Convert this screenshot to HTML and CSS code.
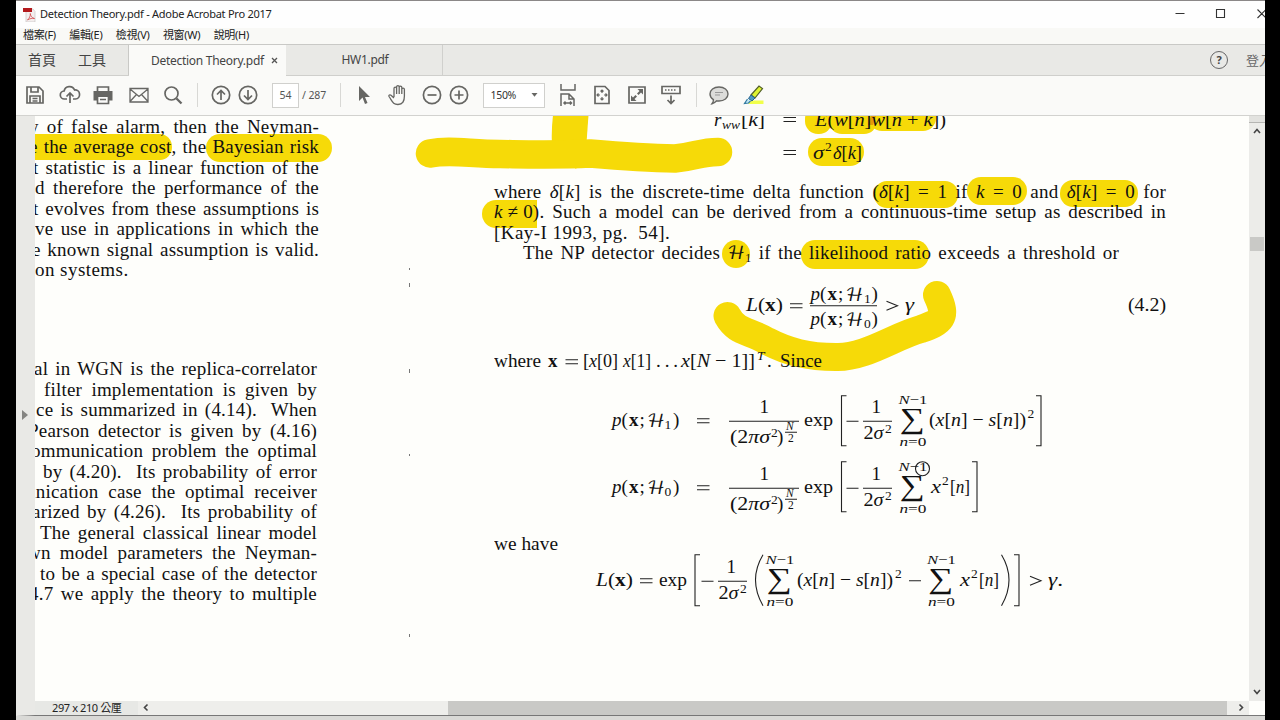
FILE: index.html
```html
<!DOCTYPE html>
<html lang="zh-Hant">
<head>
<meta charset="utf-8">
<title>Detection Theory.pdf - Adobe Acrobat Pro 2017</title>
<link rel="stylesheet" href="styles.css">
</head>
<body>
<div class="window">
  <header class="titlebar">
    <svg class="app-icon" width="13" height="14" viewBox="0 0 13 14"><path d="M3 1h7l2 2.500V14H3z" fill="#f3eeee" stroke="#c9c4c4" stroke-width=".7"/><path d="M0 0h9v4H0z" fill="#b3191c"/><path d="M4.500 12c2-2 3-4 2.800-6.500C7.500 8 9 10 11.500 10.500 9 10 7 10.500 4.500 12z" fill="none" stroke="#d2494b" stroke-width=".8"/></svg>
    <span class="title">Detection Theory.pdf - Adobe Acrobat Pro 2017</span>
    <svg class="win-buttons" width="100" height="26" viewBox="1165 1 100 26"><path d="M1175.500 12.500h9M1216.500 8.500h8v8h-8zM1257.500 8.500l8.500 8.500M1266 8.500L1257.500 17" fill="none" stroke="#333" stroke-width="1.100"/></svg>
  </header>
  <nav class="menubar"><span>檔案(F)</span><span>編輯(E)</span><span>檢視(V)</span><span>視窗(W)</span><span>說明(H)</span></nav>
  <div class="tabs">
    <div class="home"><span>首頁</span><span>工具</span></div>
    <div class="tab active"><span class="t1">Detection Theory.pdf</span><svg width="7" height="7" viewBox="0 0 7 7"><path d="M1 1l5 5M6 1L1 6" stroke="#555" stroke-width="1.300"/></svg></div>
    <div class="tab"><span class="t2">HW1.pdf</span></div>
    <div class="account"><span class="help">?</span><span class="signin">登入</span></div>
  </div>
  <div class="toolbar">
    <svg width="20" height="20" viewBox="0 0 20 20"><path d="M2 2h12l4 4v12H2zM6 2v5h7V2M5 18v-7h10v7M7.500 13.500h5M7.500 16h5"/></svg>
    <svg width="22" height="20" viewBox="0 0 22 20"><path d="M8 14H5.500a4 4 0 0 1-.4-8 5.500 5.500 0 0 1 10.500-1A4.500 4.500 0 0 1 16.500 14H14M11 18V8.500M7.500 11.500L11 8l3.500 3.500"/></svg>
    <svg width="20" height="20" viewBox="0 0 20 20"><path d="M4.500 6V2h11v4"/><path class="solid" d="M.5 6h19v9.500h-3.500V12H4v3.500H.5z"/><path d="M4.500 11h11v7.500h-11zM7 14.500h6"/></svg>
    <svg width="20" height="20" viewBox="0 0 20 20"><path d="M1 3.500h18v13.500H1zM1 4l9 7.500L19 4M1 16.500l6.500-7M19 16.500l-6.500-7" stroke-width="1.300"/></svg>
    <svg width="20" height="20" viewBox="0 0 20 20"><circle cx="8.500" cy="8.500" r="6.500"/><path d="M13.500 13.500l5 5" stroke-width="2.300"/></svg>
    <i class="sep"></i>
    <svg width="20" height="20" viewBox="0 0 20 20"><circle cx="10" cy="10" r="8.700"/><path d="M10 15V5.500M6 9.500l4-4 4 4"/></svg>
    <svg width="20" height="20" viewBox="0 0 20 20"><circle cx="10" cy="10" r="8.700"/><path d="M10 5v9.500M6 10.500l4 4 4-4"/></svg>
    <span class="page-box">54</span>
    <span class="page-total">/ 287</span>
    <i class="sep"></i>
    <svg width="14" height="20" viewBox="0 0 14 20"><path class="solid" d="M2 1v15l3.500-3.500L8 19l2.500-1L8 12h5z"/></svg>
    <svg width="22" height="22" viewBox="0 0 22 22"><path d="M7 13V4.500a1.300 1.300 0 0 1 2.600 0V10 3a1.300 1.300 0 0 1 2.600 0v7V3.500a1.300 1.300 0 0 1 2.600 0V10 5.500a1.300 1.300 0 0 1 2.600 0V12c0 5-1.500 8.500-6.500 8.500S5.500 17.500 2 12.500c-.6-1.200.8-2.200 2-1.300L7 14" stroke-width="1.300"/></svg>
    <svg width="20" height="20" viewBox="0 0 20 20"><circle cx="10" cy="10" r="8.600"/><path d="M5.500 10h9"/></svg>
    <svg width="20" height="20" viewBox="0 0 20 20"><circle cx="10" cy="10" r="8.600"/><path d="M5.500 10h9M10 5.500v9"/></svg>
    <span class="zoom-box">150%<svg width="7" height="4" viewBox="0 0 7 4"><path class="solid" d="M.5 0h6l-3 3.800z" stroke="none"/></svg></span>
    <svg width="18" height="22" viewBox="0 0 18 22"><path d="M2 0v6h14V0M2 22V10h8l5 5v7M10 10v5h5M5 19h7.500M6.500 17.500L5 19l1.500 1.500M11 17.500l1.500 1.500-1.500 1.500" stroke-width="1.500"/></svg>
    <svg width="18" height="20" viewBox="0 0 18 20"><path d="M2 1.500h10l4 4v13H2z" stroke-width="1.700"/><path d="M9 5v3M9 12v3M4 10h3M11 10h3M7.500 6.500L9 5l1.500 1.500M7.500 13.500L9 15l1.500-1.500M5.500 8.500L4 10l1.500 1.500M12.500 8.500L14 10l-1.500 1.500" stroke-width="1.200"/></svg>
    <svg width="20" height="20" viewBox="0 0 20 20"><path d="M2 2h16v16H2z"/><path class="solid" d="M10.500 4H16v5.500l-2-2-2.500 2.500L10 8.500 12.500 6zM9.500 16H4v-5.500l2 2L8.500 10l1.500 1.500L7.500 14z"/></svg>
    <svg width="20" height="20" viewBox="0 0 20 20"><path d="M1 1.500h18v7H1zM10 10.500v8M6.500 15l3.500 3.500 3.500-3.500"/><path d="M4 5h12" stroke-dasharray="1.500 1.500"/></svg>
    <i class="sep"></i>
    <svg width="20" height="20" viewBox="0 0 20 20"><path d="M10 2c5.300 0 9 3 9 7s-3.700 7-9 7c-.8 0-1.600 0-2.300-.2C6 17.500 4.500 18.500 3 18.800c1-1.300 1.500-2.800 1.400-4.200C2.300 13.300 1 11.300 1 9c0-4 3.700-7 9-7z" class="bubble"/><path d="M6 7.500h8M6 10h5" stroke="#999" stroke-width="1"/></svg>
    <svg width="22" height="20" viewBox="0 0 22 20"><path class="swash" d="M8 15.500h12.500V19H5z"/><path class="barrel" d="M8 10l8-9 3.500 2.500-7.500 9.500z"/><path class="grip" d="M8 10l4 3-3 3-3.500-2.500z"/><path class="nib" d="M4.500 14l-3 4.500 4-.5 2-2"/></svg>
  </div>
  <main class="viewer">
    <aside class="rail"><svg width="6" height="10" viewBox="0 0 6 10"><path d="M0 0l6 5-6 5z" fill="#858582"/></svg></aside>
    <section class="document">
      <svg class="ink" viewBox="35 116 1214 585" width="1214" height="585">
        <g fill="#f6da08">
          <path d="M35 134H160a12 13 0 0 1 0 26H35z"/>
          <rect x="206" y="134" width="126" height="28" rx="14"/>
          <rect x="805" y="106" width="27" height="28" rx="13"/>
          <rect x="829" y="106" width="48" height="28" rx="13"/>
          <rect x="869" y="104" width="67" height="27" rx="13"/>
          <rect x="808" y="138" width="56" height="28" rx="14"/>
          <rect x="874" y="181" width="84" height="27" rx="13"/>
          <rect x="967" y="177" width="60" height="28" rx="14"/>
          <rect x="1060" y="180" width="78" height="27" rx="13"/>
          <path d="M537 200H496a14 14 0 0 0 0 28h41z"/>
          <rect x="722" y="240" width="28" height="28" rx="14"/>
          <rect x="801" y="240" width="128" height="29" rx="14"/>
          <path d="M554 108H589L586 150 576 169 552 145Q551 127 554 108z"/>
        </g>
        <path d="M871 116h5l-3 9h-5z" fill="#e69b08"/>
        <path d="M430 153.500C450 149.500 470 154 500 154C540 154.500 560 155 590 153.500C620 156 650 158 675 158.500C695 157 700 152 718 152" class="marker" stroke-width="28.500"/>
        <path d="M727.500 316C737 333 748 330 767 341C788 352 808 357 836 357C865 358 895 336 921 329C941 322 948 318 937 295" class="marker" stroke-width="28"/>
        <path d="M409.500 268v2M409.500 283v4M409.500 369v4M409.500 454v2M409.500 634v3" stroke="#777"/>
      </svg>
      <div class="left-page">
        <p class="upper">
          <span class="ln" style="margin-left:-6px">y of false alarm, then the Neyman-</span>
          <span class="ln" style="margin-left:-6px">e the average cost, the Bayesian risk</span>
          <span class="ln" style="margin-left:-2px">t statistic is a linear function of the</span>
          <span class="ln" style="margin-left:0px">d therefore the performance of the</span>
          <span class="ln" style="margin-left:-2px">t evolves from these assumptions is</span>
          <span class="ln" style="margin-left:0px">ve use in applications in which the</span>
          <span class="ln" style="margin-left:-3px">e known signal assumption is valid.</span>
          <span class="ln last">on systems.</span>
        </p>
        <p class="lower">
          <span class="ln" style="margin-left:-1px">al in WGN is the replica-correlator</span>
          <span class="ln" style="margin-left:9px">filter implementation is given by</span>
          <span class="ln" style="margin-left:1px">ce is summarized in (4.14).&nbsp; When</span>
          <span class="ln" style="margin-left:-7px">Pearson detector is given by (4.16)</span>
          <span class="ln" style="margin-left:-4px">ommunication problem the optimal</span>
          <span class="ln" style="margin-left:8px">by (4.20).&nbsp; Its probability of error</span>
          <span class="ln" style="margin-left:-9px">unication case the optimal receiver</span>
          <span class="ln" style="margin-left:-3px">arized by (4.26).&nbsp; Its probability of</span>
          <span class="ln" style="margin-left:5px">The general classical linear model</span>
          <span class="ln" style="margin-left:-8px">wn model parameters the Neyman-</span>
          <span class="ln" style="margin-left:5px">to be a special case of the detector</span>
          <span class="ln" style="margin-left:-6px">4.7 we apply the theory to multiple</span>
        </p>
      </div>
      <div class="right-page">
        <svg class="math" viewBox="494 116 672 66" width="672" height="66">
          <text class="i" x="714" y="126">r</text><text class="i s" x="722" y="129" textLength="18" lengthAdjust="spacingAndGlyphs">ww</text><text x="741" y="126" textLength="24" lengthAdjust="spacingAndGlyphs">[<tspan class="i">k</tspan>]</text>
          <path d="M783.500 117.500h12.500M783.500 121.500h12.500M783.500 150.500h12.500M783.500 154.500h12.500"/>
          <text x="815" y="126" textLength="131" lengthAdjust="spacingAndGlyphs"><tspan class="i">E</tspan>(<tspan class="i">w</tspan>[<tspan class="i">n</tspan>]<tspan class="i">w</tspan>[<tspan class="i">n</tspan> + <tspan class="i">k</tspan>])</text>
          <text class="i" x="813" y="158.500" textLength="11" lengthAdjust="spacingAndGlyphs">σ</text><text class="s" x="825" y="151">2</text><text x="833" y="158.500" textLength="29" lengthAdjust="spacingAndGlyphs"><tspan class="i">δ</tspan>[<tspan class="i">k</tspan>]</text>
        </svg>
        <p class="body">
          <span class="ln">where <i>δ</i>[<i>k</i>] is the discrete-time delta function (<i>δ</i>[<i>k</i>] = 1 if <i>k</i> = 0 and <i>δ</i>[<i>k</i>] = 0 for</span>
          <span class="ln"><i>k</i>&#8197;≠&#8197;0). Such a model can be derived from a continuous-time setup as described in</span>
          <span class="ln kay">[Kay-I 1993, pg.&nbsp; 54].</span>
          <span class="ln np">The NP detector decides <span class="cal">ℋ</span><sub>1</sub> if the likelihood ratio exceeds a threshold or</span>
        </p>
        <svg class="math" viewBox="494 263.800 672 355" width="672" height="355">
          <defs>
            <g id="px">
              <text class="i" x="0" y="0">p</text><text x="9.500" y="0">(</text><text class="b" x="17" y="0">x</text><text x="27.500" y="0">;</text><text class="cal" x="35" y="1" textLength="18" lengthAdjust="spacingAndGlyphs">ℋ</text><text x="61" y="0">)</text>
            </g>
            <g id="sum">
              <text class="s" x="-1.500" y="-22" textLength="29" lengthAdjust="spacingAndGlyphs"><tspan class="i">N</tspan>−1</text>
              <text class="sum" x="0" y="2" textLength="25" lengthAdjust="spacingAndGlyphs">∑</text>
              <text class="s" x="-.5" y="20" textLength="27" lengthAdjust="spacingAndGlyphs"><tspan class="i">n</tspan>=0</text>
            </g>
            <g id="half">
              <path d="M-29-4.500h12M-12.500-4.500h29"/>
              <text x="-4" y="-12.500">1</text>
              <text x="-12" y="13" textLength="20" lengthAdjust="spacingAndGlyphs">2<tspan class="i">σ</tspan></text><text class="s" x="9.500" y="7">2</text>
            </g>
            <g id="norm">
              <path d="M-35-4.500h70M21 6.500h12"/>
              <text x="-4.500" y="-12.500">1</text>
              <text x="-34" y="17.500" textLength="40" lengthAdjust="spacingAndGlyphs">(2<tspan class="i">πσ</tspan></text><text class="s" x="7" y="11.500">2</text><text x="13" y="17.500">)</text>
              <text class="xs i" x="22" y="4">N</text><text class="xs" x="24" y="16">2</text>
              <text x="40" y="0" textLength="29" lengthAdjust="spacingAndGlyphs">exp</text>
            </g>
          </defs>
          <text x="746" y="311" textLength="37" lengthAdjust="spacingAndGlyphs"><tspan class="i">L</tspan>(<tspan class="b">x</tspan>)</text>
          <path d="M790 303.500h12.500M790 307.500h12.500M810 305.500h67"/>
          <use href="#px" x="810.500" y="299.500"/><text class="s" x="864" y="302.500">1</text>
          <use href="#px" x="810.500" y="324.500"/><text class="s" x="864" y="327.500">0</text>
          <path d="M886.500 301l11 4.500-11 4.500"/>
          <text class="i" x="905" y="311" textLength="9" lengthAdjust="spacingAndGlyphs">γ</text>
          <text x="1128" y="311" textLength="38" lengthAdjust="spacingAndGlyphs">(4.2)</text>

          <text x="494" y="366.500" textLength="47" lengthAdjust="spacingAndGlyphs">where</text><text class="b" x="548" y="366.500">x</text><path d="M565.500 359.500h12.500M565.500 363.500h12.500"/>
          <text x="583" y="366.500">[</text><text x="589" y="366.500" textLength="29" lengthAdjust="spacingAndGlyphs"><tspan class="i">x</tspan>[0]</text><text x="623" y="366.500" textLength="28" lengthAdjust="spacingAndGlyphs"><tspan class="i">x</tspan>[1]</text><text x="656" y="366.500" textLength="22">...</text><text x="681" y="366.500" textLength="74" lengthAdjust="spacingAndGlyphs"><tspan class="i">x</tspan>[<tspan class="i">N</tspan> − 1]]</text><text class="s i" x="757" y="359.500">T</text><text x="767" y="366.500">.</text><text x="780" y="366.500" textLength="42" lengthAdjust="spacingAndGlyphs">Since</text>

          <use href="#px" x="612" y="425.500"/><text class="s" x="664.500" y="428.500">1</text>
          <path d="M697 418.500h12.500M697 422.500h12.500"/>
          <use href="#norm" x="764" y="425.500"/>
          <path d="M846.500 395.500h-5v50h5M1036 395.500h5v50h-5"/>
          <use href="#half" x="875.500" y="425.500"/><use href="#sum" x="900" y="425.500"/>
          <text x="929" y="425.500" textLength="97" lengthAdjust="spacingAndGlyphs">(<tspan class="i">x</tspan>[<tspan class="i">n</tspan>] − <tspan class="i">s</tspan>[<tspan class="i">n</tspan>])</text><text class="s" x="1027.500" y="417.500">2</text>

          <use href="#px" x="612" y="492.500"/><text class="s" x="664.500" y="495.500">0</text>
          <path d="M697 485.500h12.500M697 489.500h12.500"/>
          <use href="#norm" x="764" y="492.500"/>
          <path d="M846.500 461.500h-5v50h5M972 461.500h5v50h-5"/>
          <use href="#half" x="875.500" y="492.500"/><use href="#sum" x="900" y="492.500"/>
          <text class="i" x="931" y="492.500" textLength="10" lengthAdjust="spacingAndGlyphs">x</text><text class="s" x="942" y="484.500">2</text><text x="950" y="492.500" textLength="20" lengthAdjust="spacingAndGlyphs">[<tspan class="i">n</tspan>]</text>
          <circle cx="922.500" cy="468.500" r="7"/>

          <text x="494" y="549.500" textLength="64" lengthAdjust="spacingAndGlyphs">we have</text>

          <text x="596" y="586" textLength="37" lengthAdjust="spacingAndGlyphs"><tspan class="i">L</tspan>(<tspan class="b">x</tspan>)</text>
          <path d="M640 578.500h12.500M640 582.500h12.500"/>
          <text x="659" y="586" textLength="28" lengthAdjust="spacingAndGlyphs">exp</text>
          <path d="M700 554.500h-5v51h5M1014 554.500h5v51h-5"/>
          <path d="M763 554.500q-15 25 0 51M1001.500 554.500q15 25 0 51" stroke-width="1.400"/>
          <use href="#half" x="730.500" y="585.500"/><use href="#sum" x="767" y="585.500"/>
          <text x="797" y="586" textLength="96" lengthAdjust="spacingAndGlyphs">(<tspan class="i">x</tspan>[<tspan class="i">n</tspan>] − <tspan class="i">s</tspan>[<tspan class="i">n</tspan>])</text><text class="s" x="895" y="578">2</text>
          <path d="M909 580.500h12M1030 576l11 4.500-11 4.500"/>
          <use href="#sum" x="928.500" y="585.500"/>
          <text class="i" x="960" y="586" textLength="10" lengthAdjust="spacingAndGlyphs">x</text><text class="s" x="971" y="578">2</text><text x="979" y="586" textLength="20" lengthAdjust="spacingAndGlyphs">[<tspan class="i">n</tspan>]</text>
          <text x="1048" y="586" textLength="15" lengthAdjust="spacingAndGlyphs"><tspan class="i">γ</tspan>.</text>
        </svg>
      </div>
    </section>
    <aside class="vscroll">
      <i class="split"></i>
      <svg class="up" width="8" height="6" viewBox="0 0 8 6"><path d="M1 5l3-3.500L7 5"/></svg>
      <i class="thumb"></i>
      <svg class="down" width="8" height="6" viewBox="0 0 8 6"><path d="M1 1l3 3.500L7 1"/></svg>
    </aside>
  </main>
  <footer class="bottombar">
    <span class="size">297 x 210 公厘</span>
    <svg width="16" height="14" viewBox="0 0 16 14"><path d="M9.500 3.500L6.500 6.500l3 3"/></svg>
    <i class="hthumb"></i>
    <svg class="right" width="22" height="14" viewBox="0 0 22 14"><path d="M12.500 3.500l3 3-3 3"/></svg>
    <i class="corner"></i>
  </footer>
</div>
</body>
</html>
```
FILE: styles.css
```css
* { box-sizing: border-box; }
body { margin: 0; width: 1280px; height: 720px; overflow: hidden; background: #000; font-family: "Noto Sans", "Noto Sans CJK TC", sans-serif; color: #333; }
p { margin: 0; }
.window { width: 1249px; height: 720px; margin-left: 16px; overflow: hidden; background: #d9d9d6; border-top: 1px solid #8b8888; display: flex; flex-direction: column; }
.titlebar { flex: none; height: 27px; background: #fefefe; display: flex; align-items: center; padding-left: 7px; }
.app-icon { margin-right: 4px; }
.title { font-size: 11px; color: #222; white-space: nowrap; letter-spacing: -.25px; margin-top: -3px; }
.win-buttons { margin-left: auto; }
.menubar { flex: none; height: 16px; background: #f9f9f6; display: flex; gap: 13.400px; align-items: center; padding-left: 7px; font-size: 11px; letter-spacing: -.3px; line-height: 14px; padding-bottom: 2px; white-space: nowrap; color: #222; }
.tabs { flex: none; height: 32px; background: #e9e9e6; border-top: 1px solid #c9c9c6; border-bottom: 1px solid #cfcfcc; display: flex; font-size: 12px; white-space: nowrap; color: #444; }
.home { width: 113px; border-right: 1px solid #c9c9c6; display: flex; gap: 22px; padding: 0 0 3px 12px; align-items: center; font-size: 14px; }
.tab { width: 157px; border-right: 1px solid #d0d0cd; display: flex; align-items: center; justify-content: center; padding-bottom: 1px; }
.t1 { letter-spacing: -.28px; }
.t2 { letter-spacing: -.3px; margin-left: 2px; }
.active { background: #fafaf8; height: 32px; justify-content: flex-start; padding: 0 0 2px 22px; gap: 7px; border-right: 0; }
.account { margin-left: auto; width: 55px; display: flex; align-items: center; gap: 18px; overflow: hidden; }
.help { flex: none; width: 18px; height: 18px; border: 1.500px solid #666; border-radius: 50%; font-size: 11px; font-weight: 700; line-height: 15px; text-align: center; }
.signin { font-size: 13px; color: #666; padding-bottom: 2px; }
.toolbar { flex: none; height: 40px; background: #fafaf8; border-bottom: 1px solid #d2d2cf; padding: 0 0 1px 2px; display: grid; grid-template-columns: 34px 36px 30px 42px 26px 22px 26px 28px 37px 31px 20px 28px 40px 28px 26px 83px 26px 42px 28px 40px 10px 36px 34px; align-items: center; justify-items: center; }
.toolbar svg { fill: none; stroke: #666663; stroke-width: 1.700; }
.toolbar .solid { fill: #666663; stroke: none; }
.toolbar .bubble { fill: #dcdcda; stroke-width: 1.400; }
.toolbar .swash { fill: #f1ff4a; stroke: none; }
.toolbar .barrel { fill: #def332; stroke: #536029; stroke-width: 1.200; }
.toolbar .grip { fill: #4d9ac4; stroke: #28638c; stroke-width: 1; }
.toolbar .nib { fill: #bfe6f5; stroke: #3179a0; stroke-width: 1.200; }
.sep { width: 1px; height: 24px; background: #d8d8d5; }
.page-box { justify-self: end; width: 27px; height: 25px; border: 1px solid #d0d0cd; background: #fff; font-size: 10.500px; line-height: 23px; text-align: center; color: #555; }
.page-total { justify-self: start; padding-left: 3px; font-size: 10.500px; letter-spacing: -.1px; white-space: nowrap; color: #555; }
.zoom-box { width: 62px; height: 25px; border: 1px solid #d0d0cd; background: #fff; font-size: 10.500px; letter-spacing: -.3px; line-height: 23px; padding: 0 6px 0 7px; display: flex; align-items: center; justify-content: space-between; }
.viewer { flex: none; height: 585px; display: flex; background: #fefefb; }
.rail { flex: none; width: 19px; background: #e9e9e6; padding-left: 6px; padding-top: 294px; line-height: 0; }
.document { flex: none; width: 1214px; height: 585px; overflow: hidden; position: relative; display: flex; font-family: "Liberation Serif", serif; font-size: 19px; color: #111; }
.ink { position: absolute; left: 0; top: 0; }
.marker { fill: none; stroke: #f6da08; stroke-linecap: round; stroke-linejoin: round; }
.left-page { position: relative; flex: none; width: 459px; padding-top: 1px; }
.upper { width: 284px; }
.lower { width: 282px; margin-top: 78.900px; }
.ln { display: block; height: 20.450px; line-height: 20.450px; white-space: nowrap; text-align: justify; text-align-last: justify; letter-spacing: .2px; }
.last, .kay { text-align-last: left; letter-spacing: .45px; }
.right-page { position: relative; flex: none; width: 672px; }
.right-page .math { display: block; overflow: hidden; }
.np { margin-left: 29px; width: 596px; }
.np sub { font-size: 12px; line-height: 0; vertical-align: -3px; }
.cal { font-family: "DejaVu Math TeX Gyre", "DejaVu Serif", "DejaVu Sans", serif; font-size: 18px; line-height: 0; }
.math { fill: #111; }
.math path, .math circle { fill: none; stroke: #222; stroke-width: 1.100; }
.math .i { font-style: italic; }
.math .b { font-weight: 700; }
.math .s { font-size: 13.500px; }
.math .xs { font-size: 11.500px; }
.math .sum { font-size: 29px; }
.vscroll { width: 16px; background: #ecece9; display: flex; flex-direction: column; align-items: center; }
.vscroll svg, .bottombar svg { fill: none; stroke: #444; stroke-width: 1.600; }
.split { width: 16px; height: 7px; background: #e2e2df; border-bottom: 1px solid #b5b5b2; }
.up { margin-top: 5px; }
.thumb { width: 14px; height: 14px; margin-top: 103px; background: #c9c9c6; }
.down { margin-top: auto; margin-bottom: 6px; }
.bottombar { flex: none; height: 15px; background: #eeeeeb; border-bottom: 1px solid #777; border-left: 19px solid #e9e9e6; display: flex; align-items: center; }
.size { width: 103px; height: 14px; background: #e7e8e5; padding-left: 17px; font-size: 11px; letter-spacing: -.4px; line-height: 14px; color: #222; white-space: nowrap; }
.hthumb { width: 779px; height: 14px; margin-left: 294px; background: #c9c9c6; }
.corner { flex: 1; height: 14px; background: #fefefb; }
```
